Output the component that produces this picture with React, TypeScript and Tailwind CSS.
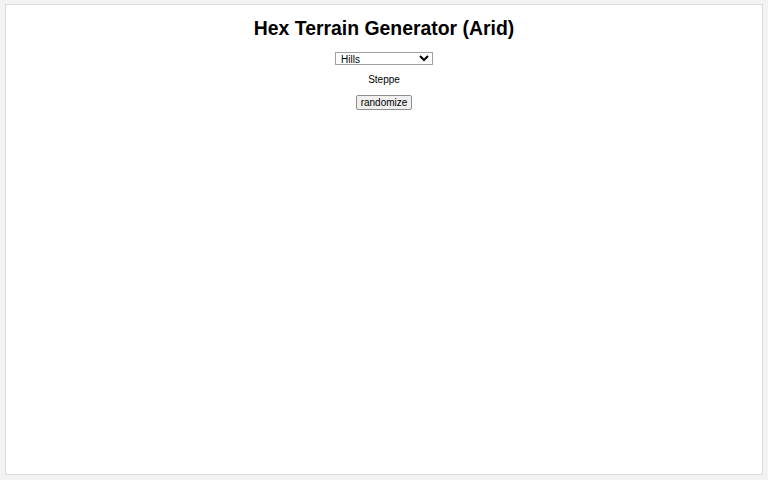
import React from "react";

export default function App() {
  return (
    <div className="h-[480px] w-[768px] bg-[#f3f3f3] px-[5px] pt-[4px] pb-[5px] font-['Liberation_Sans',Arial,sans-serif] text-black">
      <div className="flex h-full flex-col items-center border border-[#dcdcdc] bg-white">
        <h1 className="mt-[12px] text-[19.4px] leading-[23px] font-bold">Hex Terrain Generator (Arid)</h1>
        <select
          defaultValue="Hills"
          className="mt-[12px] h-[13px] w-[98px] border border-[#a0a0a0] bg-white pl-[1px] text-[10px] leading-[10px]"
        >
          <option>Hills</option>
          <option>Mountains</option>
          <option>Desert</option>
        </select>
        <p className="mt-[9px] text-[10px] leading-[12px]">Steppe</p>
        <button className="mt-[9px] h-[15px] rounded-[2px] border border-[#8f8f8f] bg-[#efefef] px-[4px] text-[10px] leading-[12px]">
          randomize
        </button>
      </div>
    </div>
  );
}
